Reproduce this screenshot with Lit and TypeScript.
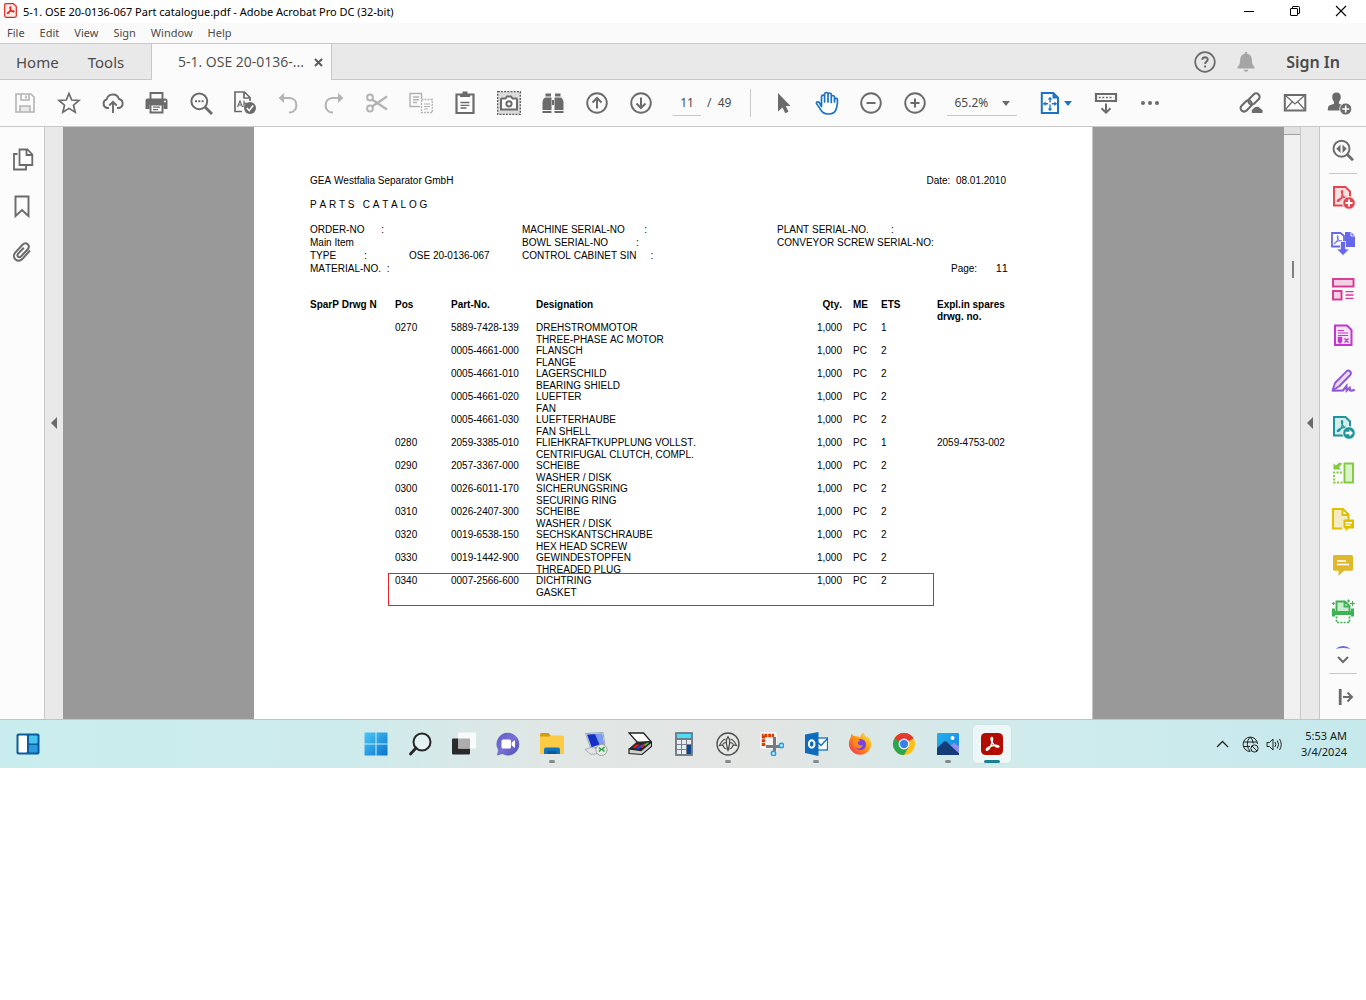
import { LitElement, html, css, svg, nothing } from "lit";
import type { SVGTemplateResult } from "lit";
import { customElement } from "lit/decorators.js";
import { classMap } from "lit/directives/class-map.js";

type Glyph = SVGTemplateResult;

const PDF_MARK = "M12 5.5c-1.6 0-.9 3 .6 5.6 1.300 2.200 3 3.700 5 4 1.900.2 1.700-1.500-.6-1.700-2.600-.2-6 .6-8.600 2-2.300 1.300-2.600 2.900-1.300 2.800 1.700-.2 3.500-3.600 4.500-6.400.9-2.700 1.300-6.300.4-6.300z";

const tool: Record<string, Glyph> = {
  save: svg`<path d="M3 3h15l3 3v15H3z M8 3v6h8V3 M7 21v-6h10v6" fill="none" stroke="currentColor" stroke-width="1.600"/><path d="M13 4.500v3" stroke="currentColor" stroke-width="1.600"/><rect x="7.500" y="15.500" width="9" height="5" fill="currentColor" opacity=".25"/>`,
  star: svg`<path d="M12 2.500l2.700 6.500 7.300.500-5.500 4.700 1.700 7-6.200-3.800-6.200 3.800 1.700-7L2 9.500 9.300 9z" fill="none" stroke="currentColor" stroke-width="1.700"/>`,
  cloud: svg`<path d="M8 17H6.200A4.500 4.500 0 0 1 5.700 8.300 6.400 6.400 0 0 1 18 8a4.600 4.600 0 0 1 0 9h-2" fill="none" stroke="currentColor" stroke-width="1.900"/><path d="M12 22V11M8.300 14.500L12 10.800l3.700 3.700" fill="none" stroke="currentColor" stroke-width="1.900"/>`,
  print: svg`<path d="M5.500 8V2h12v6" fill="none" stroke="currentColor" stroke-width="1.900"/><path d="M2.500 7.500h18q2 0 2 2V18h-4v-4H4.500v4h-4V9.500q0-2 2-2z" fill="currentColor"/><path d="M5.500 13.500v8h12v-8z" fill="#fff" stroke="currentColor" stroke-width="1.900"/><path d="M8 16.200h7M8 18.700h5" stroke="currentColor" stroke-width="1.300"/><circle cx="20" cy="10.500" r="1" fill="#fff"/>`,
  find: svg`<circle cx="10.300" cy="10.300" r="7.900" fill="none" stroke="currentColor" stroke-width="2"/><path d="M16 16l7 7" stroke="currentColor" stroke-width="2.800"/><path d="M6 9.300h2v2H6zm3.300 0h2v2h-2zm3.300 0h2v2h-2z" fill="currentColor"/>`,
  spell: svg`<path d="M9 20.500H2V1h9.500L17 6.500V10M11 1v6h6" fill="none" stroke="currentColor" stroke-width="1.700"/><path d="M4.500 16l2.500-6 2.500 6M5.500 14h3.200M11 9.500V16M11 13q3-2 3 1" fill="none" stroke="currentColor" stroke-width="1.200"/><circle cx="17" cy="17" r="6" fill="currentColor"/><path d="M13.800 17l2.400 2.500 4-5" fill="none" stroke="#fff" stroke-width="1.600"/>`,
  undo: svg`<path d="M4 7h8.500c9.500.5 9 14.500-.5 14.500" fill="none" stroke="currentColor" stroke-width="2.100"/><path d="M1.500 7L7 2v10z" fill="currentColor"/>`,
  redo: svg`<path d="M20 7h-8.500C2 7.500 2.500 21.500 12 21.500" fill="none" stroke="currentColor" stroke-width="2.100"/><path d="M22.500 7L17 2v10z" fill="currentColor"/>`,
  cut: svg`<circle cx="5" cy="6.500" r="2.900" fill="none" stroke="currentColor" stroke-width="2"/><circle cx="5" cy="17.500" r="2.900" fill="none" stroke="currentColor" stroke-width="2"/><path d="M7 8.500L22 18.500M7 15.500L22 5.500" stroke="currentColor" stroke-width="2.300"/>`,
  copy: svg`<path d="M11 15.500H1V2.500h11.500V8M4 6h6M4 8.700h6M4 11.500h4" fill="none" stroke="currentColor" stroke-width="1.500"/><path d="M12.500 8.500h10.800V21.500H12.500z" fill="#fbfbfb" stroke="currentColor" stroke-width="1.400" stroke-dasharray="2 1"/><path d="M15 13h6M15 15.500h6M15 18h4" stroke="currentColor" stroke-width="1.200"/>`,
  paste: svg`<path d="M3.500 3.500h17v18.500h-17z" fill="#fff" stroke="currentColor" stroke-width="2.200"/><path d="M7 3h10v3H7zM9.500 3V.5h5V3z" fill="currentColor"/><path d="M7.500 11.500h9M7.500 14.300h9M7.500 17h6" stroke="currentColor" stroke-width="1.300"/>`,
  snap: svg`<rect x=".7" y=".7" width="22.600" height="22.600" fill="#dcdcdc" stroke="#5a5a5a" stroke-width="1.300" stroke-dasharray="2 1.200"/><path d="M5 7.500h3.500l1.500-2h4l1.500 2H19q1 0 1 1V18.500H4V8.500q0-1 1-1z" fill="#fff" stroke="currentColor" stroke-width="2"/><circle cx="12" cy="12.800" r="2.600" fill="#fff" stroke="currentColor" stroke-width="2"/>`,
  binoc: svg`<path d="M4.500 2.500h5.500v3H4.500zM14 2.500h5.500v3H14zM4 6.500h6.500V19H1.500v-8q0-3 2.500-4.500zM20 6.500h-6.500V19h9v-8q0-3-2.500-4.500zM1.500 20h9v2h-9zM13.500 20h9v2h-9zM11 9h2v5h-2z" fill="currentColor"/>`,
  up: svg`<circle cx="12" cy="12" r="9.800" fill="none" stroke="currentColor" stroke-width="1.900"/><path d="M12 17.500V7.500M7.500 11.500L12 7l4.500 4.500" fill="none" stroke="currentColor" stroke-width="2"/>`,
  down: svg`<circle cx="12" cy="12" r="9.800" fill="none" stroke="currentColor" stroke-width="1.900"/><path d="M12 6.500v10M7.500 12.500L12 17l4.500-4.500" fill="none" stroke="currentColor" stroke-width="2"/>`,
  arrow: svg`<path d="M7 2v18.500l4.500-4 2.700 5.800 3.300-1.500L14.800 15h4.700z" fill="currentColor"/>`,
  hand: svg`<path d="M6.500 15.500V5.800q.2-1.600 1.600-1.600 1.500 0 1.500 1.600V11 3.200Q9.800 1.500 11.300 1.500T13 3.200V11 3.500q.2-1.500 1.700-1.500t1.600 1.600V11.500 6q.2-1.500 1.600-1.500T19.500 6q0 0 0 1.500V11l.1-2.500q.4-1.400 1.700-1.200 1.200.3 1.200 1.700c0 6-.7 10-3.500 12.500-2.500 2-8.500 2-11 0C5.500 19.500 4 15.500 1.600 12.700q-.6-1.200.5-1.700 1.400-.5 2.400.9z" fill="#fff" stroke="currentColor" stroke-width="1.700" stroke-linejoin="round"/>`,
  minus: svg`<circle cx="12" cy="12" r="9.800" fill="none" stroke="currentColor" stroke-width="1.900"/><path d="M7.500 12h9" stroke="currentColor" stroke-width="2"/>`,
  plus: svg`<circle cx="12" cy="12" r="9.800" fill="none" stroke="currentColor" stroke-width="1.900"/><path d="M7.500 12h9M12 7.500v9" stroke="currentColor" stroke-width="2"/>`,
  fit: svg`<path d="M3.800 2h11.500L20 6.700V22H3.800z" fill="#fff" stroke="currentColor" stroke-width="2"/><path d="M14.500 2v5.500H20z" fill="currentColor"/><path d="M12 7v4.500M12 13.500v5.500M5.500 12.700h4.700M13.800 12.700h4.700" stroke="currentColor" stroke-width="1.400"/><path d="M9.700 8.500L12 5.800l2.300 2.700zM9.700 17.500L12 20.200l2.300-2.700zM7.700 10.400L5 12.700l2.700 2.300zM16.300 10.400L19 12.700 16.300 15z" fill="currentColor"/>`,
  scroll: svg`<path d="M2 3h20v7H2z" fill="none" stroke="currentColor" stroke-width="2.200"/><path d="M4.700 6.500h14.600" stroke="currentColor" stroke-width="1.700" stroke-dasharray="2 1.600"/><path d="M12 12.500V20M7.500 17.200l4.500 4.500 4.500-4.500" fill="none" stroke="currentColor" stroke-width="2"/>`,
  more: svg`<circle cx="5" cy="12" r="2" fill="currentColor"/><circle cx="12" cy="12" r="2" fill="currentColor"/><circle cx="19" cy="12" r="2" fill="currentColor"/>`,
  link: svg`<g fill="none" stroke="currentColor" stroke-width="2.100"><rect x="8.500" y="4.500" width="13" height="7" rx="3.500" transform="rotate(-45 15 8)"/><rect x=".7" y="11.500" width="13" height="7" rx="3.500" transform="rotate(-45 7.200 15)"/></g><path d="M13.500 22.500a3 3 0 0 1 .8-5.300 4.300 4.300 0 0 1 7.500.3 3 3 0 0 1 1.500 5z" fill="currentColor" stroke="#fbfbfb"/>`,
  mail: svg`<path d="M1.800 4h20.500v15.500H1.800z" fill="none" stroke="currentColor" stroke-width="2"/><path d="M2.500 4.500L12 13l9.500-8.500M2.500 18.500L9 11M21.500 18.500L15 11" fill="none" stroke="currentColor" stroke-width="1.200"/>`,
  user: svg`<path d="M9.500 1.500c3 0 4.300 2 4.300 4.500 0 2-.8 3.700-1.800 4.700v2l3 1.200q-3 2.300-2 5.500H.8q0-4.500 1.500-5L7 12.700v-2C6 9.700 5.200 8 5.200 6c0-2.500 1.300-4.500 4.300-4.500z" fill="currentColor"/><circle cx="18.700" cy="18" r="6" fill="currentColor" stroke="#fbfbfb" stroke-width=".8"/><path d="M15.200 18h7M18.700 14.500v7" stroke="#fff" stroke-width="1.600"/>`,
  help: svg`<circle cx="12" cy="12" r="9.800" fill="none" stroke="currentColor" stroke-width="1.700"/><path d="M9.300 9.800q.1-2.600 2.800-2.600 2.600.1 2.600 2.300 0 1.300-1.400 2.200-1.200.9-1.200 2.200M12.100 15.600v2" fill="none" stroke="currentColor" stroke-width="2"/>`,
  bell: svg`<path d="M10.800 2.500q1.200-1.500 2.400 0v1.200q4.600 1 4.600 6 0 5 2.700 7.300v1.500h-17V17q2.700-2.300 2.700-7.300 0-5 4.600-6zM9.500 19.700h5q-.6 2.100-2.500 2.100t-2.500-2.100z" fill="#a5a5a5"/>`,
  pages: svg`<path d="M7.500 6H4V21.500H16V18" fill="none" stroke="currentColor" stroke-width="1.800"/><path d="M9.500 1.500h8L22.300 6.500V17H9.500zM16.500 1.500V7h5.700" fill="#fff" stroke="currentColor" stroke-width="1.800"/>`,
  mark: svg`<path d="M5.500 2.500h13v19.500l-6.500-6-6.500 6z" fill="none" stroke="currentColor" stroke-width="1.900"/>`,
  clip: svg`<path d="M20 10.500l-7.500 8.300c-4.600 4.700-11.500-1-7.300-6.200L12.500 4.800c3.600-3.600 8.400.6 5.200 4.500l-6.500 7c-2.300 2.200-5-.1-3-2.700l5.600-5.800" fill="none" stroke="currentColor" stroke-width="2"/>`,
  lens: svg`<circle cx="10.500" cy="10.700" r="8" fill="none" stroke="currentColor" stroke-width="1.900"/><path d="M16.300 16.500l5.700 5.700" stroke="currentColor" stroke-width="2.700"/><path d="M9.500 6.500v8.500L5.300 10.700zM11.500 6.500v8.500l4.200-4.300z" fill="currentColor"/>`,
  createPdf: svg`<path d="M3 2h11.500L19 6.500V20.500H3z" fill="#fbe0e1" stroke="currentColor" stroke-width="2"/><path d=${PDF_MARK} transform="translate(1 1) scale(.85)" fill="none" stroke="currentColor" stroke-width="1.500"/><circle cx="18" cy="18" r="6.300" fill="currentColor" stroke="#fbfbfb"/><path d="M14.500 18h7M18 14.500v7" stroke="#fff" stroke-width="1.900"/>`,
  combine: svg`<path d="M14 1h6l4 4v11H14z" fill="currentColor"/><path d="M20 1v4h4" fill="none" stroke="#fff" stroke-width=".9"/><path d="M1 2h8.500L13 5v10.500H1z" fill="#fff" stroke="currentColor" stroke-width="1.800"/><path d=${PDF_MARK} transform="translate(-1 1) scale(.65)" fill="none" stroke="currentColor" stroke-width="1.500"/><path d="M9.500 10.500h5v7.500h4L12 24.500 5.500 18h4z" fill="currentColor" stroke="#fbfbfb" stroke-width=".8"/>`,
  organize: svg`<rect x="2" y="2" width="20.500" height="7.500" fill="#f5cfe4" stroke="currentColor" stroke-width="1.900"/><rect x="2" y="14" width="8.500" height="8.500" fill="#f5cfe4" stroke="currentColor" stroke-width="1.900"/><path d="M14.500 14.700h8M14.500 18h8M14.500 21.300h8" stroke="currentColor" stroke-width="1.300"/>`,
  form: svg`<path d="M4 2.500h12l4.500 4.500v15H4z" fill="#f7e3f9" stroke="currentColor" stroke-width="2"/><path d="M7 7.500h6M7 10h10M7 12.500h10" stroke="currentColor" stroke-width="1.200"/><path d="M7.500 14.500h3v4l-1.500 1.500-1.500-1.500zM13.500 15.500l4 4M17.500 15.500l-4 4" stroke="currentColor" stroke-width="1.400" fill="currentColor"/>`,
  sign: svg`<path d="M1.500 21.500L4 14 15.500 2.300q2-1.500 3.700.2 1.500 1.700.1 3.500L8.500 17z" fill="#e9dcf9" stroke="currentColor" stroke-width="1.900" stroke-linejoin="round"/><path d="M1.500 21.700L12 21.500l3.500-4.500.2 4.500 3-2.700.5 2.700q3 .5 4.500-1" fill="none" stroke="currentColor" stroke-width="2.200"/>`,
  exportPdf: svg`<path d="M3 2h11.500L19 6.500V20.500H3z" fill="#d3ecec" stroke="currentColor" stroke-width="2"/><path d=${PDF_MARK} transform="translate(1 1) scale(.85)" fill="none" stroke="currentColor" stroke-width="1.500"/><circle cx="18" cy="18" r="6.300" fill="currentColor" stroke="#fbfbfb"/><path d="M14.500 16.700h4v-2.200l3.500 3.500-3.500 3.500v-2.200h-4z" fill="#fff"/>`,
  optimize: svg`<rect x="13.500" y="2.500" width="8.500" height="19" fill="#dcf3cb" stroke="currentColor" stroke-width="1.900"/><path d="M11 11.500H3v10h8.500" fill="none" stroke="currentColor" stroke-width="1.900" stroke-dasharray="2 1.500"/><path d="M2.500 2.500l2.300 2L8.500 1.500l2.800 1L8 6.200l2 2.300H2.500z" fill="currentColor"/>`,
  protect: svg`<path d="M11 21.500H2V2h10l5.500 5.500V13M11.500 2v6h6" fill="#f3ecc2" stroke="currentColor" stroke-width="2"/><path d="M12.500 12.500h10.500v9h-5.500l-2.800 3v-3h-2.200z" fill="currentColor"/><path d="M14.500 15.700h6.500M14.500 18.300h5" stroke="#fff" stroke-width="1.400"/>`,
  comment: svg`<path d="M3.500 2h17q1.500 0 1.500 1.500v12.700q0 1.500-1.500 1.500H13L7.500 23v-5.300h-4Q2 17.700 2 16.200V3.500Q2 2 3.500 2z" fill="currentColor"/><path d="M6 8h9M6 11.500h12" stroke="#fff" stroke-width="1.700"/>`,
  scan: svg`<path d="M5.500 12V2.500h8.500l4.500 4.500v5M13.500 2.500v5h5" fill="#c9ebcf" stroke="currentColor" stroke-width="1.900"/><path d="M1 9.500h3V12h16V9.500h3v8h-3V16H4v1.500H1z" fill="currentColor"/><path d="M5.500 17.500v6h13v-6" fill="none" stroke="currentColor" stroke-width="1.700" stroke-dasharray="2 1.300"/><path d="M2.500 3v3M1 4.500h3M17.500.5v3M16 2h3M21.500 2v5M19 4.500h5" stroke="currentColor" stroke-width="1.200"/>`,
  next: svg`<path d="M12 11q-4.500.2-7.500 3l3.500-.7q4-.6 8 0l3.500.7q-3-2.800-7.500-3z" fill="#6a67e8"/>`,
  collapse: svg`<path d="M9.200 4v16" stroke="currentColor" stroke-width="2.800"/><path d="M12 12h9M16.500 7.500L21 12l-4.500 4.500" fill="none" stroke="currentColor" stroke-width="2"/>`,
};

const app: Record<string, Glyph> = {
  widgets: svg`<rect x=".5" y="1.500" width="23" height="21" rx="2" fill="#0b5d9e"/><rect x="2.500" y="3.500" width="8.500" height="17" rx="1" fill="#fff"/><rect x="13" y="3.500" width="8.500" height="8" rx="1" fill="#49c3f2"/><rect x="13" y="13" width="8.500" height="7.500" rx="1" fill="#2a9be0"/>`,
  start: svg`<defs><linearGradient id="w" x1="0" y1="0" x2="1" y2="1"><stop offset="0" stop-color="#4cc9f7"/><stop offset="1" stop-color="#0673cf"/></linearGradient></defs><path d="M.5.500h11v11H.5zM12.500.500h11v11h-11zM.5 12.500h11v11H.5zM12.500 12.500h11v11h-11z" fill="url(#w)"/>`,
  search: svg`<circle cx="14" cy="10" r="8.500" fill="#e5f2f2" stroke="#262626" stroke-width="2"/><path d="M8 16l-5.500 6" stroke="#262626" stroke-width="2.800" stroke-linecap="round"/>`,
  tasks: svg`<rect x="0" y="6.500" width="18" height="16" rx="1" fill="#2b2b2b"/><rect x="6" y=".5" width="18" height="16" rx="1" fill="#fafafa"/><path d="M6 6.500h12v10H6z" fill="#adadad"/>`,
  chat: svg`<defs><linearGradient id="c" x1="0" y1="0" x2="1" y2="1"><stop offset="0" stop-color="#5b5fc7"/><stop offset=".5" stop-color="#7a6fd6"/><stop offset="1" stop-color="#4a4cb4"/></linearGradient></defs><path d="M12 .8a11.300 11.300 0 1 1-5.500 21.200L.8 23.500 2.200 18A11.300 11.300 0 0 1 12 .8z" fill="url(#c)"/><rect x="5.500" y="7.500" width="9.500" height="9" rx="1.500" fill="#fff"/><path d="M15.700 10.500L19 8v8l-3.300-2.500z" fill="#fff"/>`,
  folder: svg`<path d="M0 2.500q0-1.500 1.500-1.500h7l2 2.500V8H0z" fill="#d99a0b"/><path d="M0 4.500h9.500L11 3.500h11.500q1.500 0 1.500 1.500v17H0z" fill="#fbcb45"/><path d="M4 22v-4.500q0-2 2-2h12q2 0 2 2V22z" fill="#1173bb"/><path d="M7.500 19h9v3h-9z" fill="#0b5791"/>`,
  remote: svg`<path d="M1.500 1.500L19 .5l2 12L7 17z" fill="#dce6ee" stroke="#8a98a6" stroke-width=".8"/><path d="M3 2.500L18 1.800l1.600 9.700L7.500 15.200z" fill="#1430c8"/><path d="M11 2.200l7-.4 1.600 9.700-4 1.200z" fill="#7d9df3"/><path d="M1 17.500l6-2 6 1 1 5-7 1z" fill="#dfe4e8" stroke="#8f989f" stroke-width=".7"/><circle cx="17.500" cy="18" r="5.600" fill="#e7ebe6" stroke="#9aa39a"/><path d="M15 15.500l2 2-2 2M20.500 15l-2.300 2.300 2.300 2.200" stroke="#2ba143" stroke-width="1.600" fill="none"/>`,
  scanner: svg`<path d="M1 1h14.500L23 9.500 10 11z" fill="#fff" stroke="#222" stroke-width="1.300"/><path d="M1 17l8-7 14.500 0L13 18.500z" fill="#222" stroke="#333"/><path d="M4.500 15.700l4-3.500 3 .5-4 3.500z" fill="#e02020"/><path d="M8 16.400l5-4 2.500.5-4.500 4z" fill="#2040f0"/><path d="M12 15.500l4-4h2.500l-4 4.500z" fill="#e02020"/><path d="M15.500 13.500l3.500-2.700h2.500l-3.500 3z" fill="#2be02b"/><path d="M1 17l12 1.500 10.500-8.500v4.500L14 22.500 1 21.500z" fill="#d0d0d0" stroke="#222" stroke-width="1.200"/>`,
  calc: svg`<rect x="3" y="0" width="18" height="24" rx="1" fill="#747f8c"/><rect x="5" y="2" width="14" height="4" fill="#4fdcf7"/><path d="M5 8h4v4H5zM10 8h4v4h-4zM15 8h4v4h-4zM5 13h4v4H5zM10 13h4v4h-4zM5 18h4v4H5zM10 18h4v4h-4z" fill="#e8ebee"/><path d="M15 13h4v9h-4z" fill="#0d4590"/>`,
  gea: svg`<circle cx="12" cy="12" r="11" fill="#e7e9e7" stroke="#4c4c4c" stroke-width="1.300"/><path d="M12 4.500Q9.500 8 10.500 12l1.500 7 1.500-7q1-4-1.500-7.500zM9.500 7Q6 8 3.500 13.500q3-1 4 .5.300 2.500 3 3M14.500 7q3.500 1 6 6.500-3-1-4 .5-.3 2.500-3 3M6.500 12.500Q8 10.500 10 10.500M17.500 12.500q-1.500-2-3.500-2" fill="none" stroke="#4c4c4c" stroke-width="1.200"/>`,
  snip: svg`<rect x="0" y="0" width="17" height="17" rx="2" fill="#f5f5f5"/><path d="M3.500 14V3.500H14" fill="none" stroke="#d83b01" stroke-width="3.400" stroke-dasharray="3 .8"/><path d="M14.500 5v9.500h5M6 14.500h8M14.500 14v5" stroke="#767a80" stroke-width="3" fill="none"/><circle cx="21.500" cy="13.500" r="2.100" fill="#fff" stroke="#1e9be0" stroke-width="1.600"/><circle cx="13.500" cy="21.500" r="2.100" fill="#fff" stroke="#1e9be0" stroke-width="1.600"/>`,
  outlook: svg`<rect x="12" y="6" width="11.500" height="12" fill="#fff" stroke="#1173c6" stroke-width="1.300"/><path d="M13 9.500l4 4 7-7.500" fill="none" stroke="#1173c6" stroke-width="1.500"/><path d="M1 2.500L14.500 0v24L1 21z" fill="#0f6cbd"/><ellipse cx="7.700" cy="12" rx="2.800" ry="3.700" fill="none" stroke="#fff" stroke-width="2"/>`,
  firefox: svg`<defs><linearGradient id="f" x1="1" y1="0" x2="0" y2="1"><stop offset="0" stop-color="#fff04a"/><stop offset=".45" stop-color="#ff980e"/><stop offset="1" stop-color="#f0285a"/></linearGradient></defs><path d="M3 5q-.3-1.700.5-3 1.500 1.800 3.500 2.300Q10 4 12 5.500 12.500 2 16 .5q-.3 2.800 2.700 5 .8-.5.500-1.700Q23.300 7.500 23.200 13A11.200 11.200 0 1 1 3 5z" fill="url(#f)"/><circle cx="12.500" cy="12.500" r="5.500" fill="#7542e5"/><path d="M5 8.500q4-2 7.500.5-3.500.5-2.500 3 2 2.500 5 .8-1.500 4.200-5.500 3.500Q4.500 14.500 5 8.500z" fill="#ff8a16"/>`,
  chrome: svg`<circle cx="12" cy="12" r="11" fill="#fbc116"/><path d="M12 12L2.470 6.500A11 11 0 0 1 21.530 6.500z" fill="#e33b2e"/><path d="M2.470 6.500A11 11 0 0 0 12 23l4.800-8.200L12 12z" fill="#2da44f"/><path d="M7.500 14.500L2.900 6.500l5-.5 4.100 6z" fill="#2da44f"/><path d="M2.700 6.200A11 11 0 0 1 21.500 6.500H12L7.500 10z" fill="#e33b2e"/><circle cx="12" cy="12" r="5.400" fill="#fff"/><circle cx="12" cy="12" r="4.200" fill="#3c7fe8"/>`,
  photos: svg`<defs><linearGradient id="p" x1="0" y1="0" x2="1" y2="1"><stop offset="0" stop-color="#21b2ee"/><stop offset="1" stop-color="#1b7fe0"/></linearGradient></defs><rect x="1" y="1" width="22" height="22" rx="1" fill="url(#p)"/><path d="M12 15l5-3.500q1.500-1 3 .5l3 2.500V23h-7z" fill="#8a8fe8"/><path d="M1 16l6.500-6q1.700-1.500 3.300 0L23 21.500V23H1z" fill="#133c78"/><circle cx="16.500" cy="6" r="2" fill="#fff"/>`,
  acrobat: svg`<rect x="1" y="1" width="22" height="22" rx="4.500" fill="#b30b00"/><path d=${PDF_MARK} fill="none" stroke="#fff" stroke-width="1.500"/>`,
};

const SVG = (g: Glyph, cls = "icon") => html`<svg class=${cls} viewBox="0 0 24 24" aria-hidden="true">${g}</svg>`;

@customElement("icon-button")
class IconButton extends LitElement {
  static properties = { glyph: {}, label: {}, tone: {} };
  declare glyph: string;
  declare label: string;
  declare tone: string;
  static styles = css`
    :host { display: block; }
    button { display: flex; width: 100%; height: 100%; padding: 0; border: 0; background: none; align-items: center; justify-content: center; color: #6b6b6b; }
    .icon { width: 24px; height: 24px; flex: none; overflow: visible; }
    .off { color: #b4b4b4; }
    .blue { color: #1b73c8; }
    .red { color: #e34850; }
    .indigo { color: #6767ec; }
    .pink { color: #d83790; }
    .magenta { color: #c038cc; }
    .purple { color: #9256d9; }
    .teal { color: #1b959a; }
    .lime { color: #7fcb3c; }
    .gold { color: #dfbf00; }
    .amber { color: #dfb92b; }
    .green { color: #3fb354; }
  `;
  render() {
    return html`<button class=${this.tone ?? ""} aria-label=${this.label}>${SVG(tool[this.glyph])}</button>`;
  }
}

type Row = [string, string, string, string, string, string];
const rows: Row[] = [
  ["0270", "5889-7428-139", "DREHSTROMMOTOR", "THREE-PHASE AC MOTOR", "1", ""],
  ["", "0005-4661-000", "FLANSCH", "FLANGE", "2", ""],
  ["", "0005-4661-010", "LAGERSCHILD", "BEARING SHIELD", "2", ""],
  ["", "0005-4661-020", "LUEFTER", "FAN", "2", ""],
  ["", "0005-4661-030", "LUEFTERHAUBE", "FAN SHELL", "2", ""],
  ["0280", "2059-3385-010", "FLIEHKRAFTKUPPLUNG VOLLST.", "CENTRIFUGAL CLUTCH, COMPL.", "1", "2059-4753-002"],
  ["0290", "2057-3367-000", "SCHEIBE", "WASHER / DISK", "2", ""],
  ["0300", "0026-6011-170", "SICHERUNGSRING", "SECURING RING", "2", ""],
  ["0310", "0026-2407-300", "SCHEIBE", "WASHER / DISK", "2", ""],
  ["0320", "0019-6538-150", "SECHSKANTSCHRAUBE", "HEX HEAD SCREW", "2", ""],
  ["0330", "0019-1442-900", "GEWINDESTOPFEN", "THREADED PLUG", "2", ""],
  ["0340", "0007-2566-600", "DICHTRING", "GASKET", "2", ""],
];

@customElement("catalog-page")
class CatalogPage extends LitElement {
  static styles = css`
    :host { display: block; font: 10px/13px "Liberation Sans", Arial, sans-serif; color: #000; font-kerning: none; }
    .sheet { background: #fff; padding: 47px 86px 120px 56px; border-right: 1px solid #c4c4c4; position: relative; }
    .top { display: flex; justify-content: space-between; white-space: pre; }
    h1 { font: inherit; margin: 11px 0 12px; white-space: pre; }
    .meta { display: grid; grid-template-columns: 99px 113px 255px 1fr; white-space: pre; }
    .page-no { display: flex; justify-content: space-between; padding-left: 174px; margin-right: -2px; }
    .num { font-size: 11px; }
    table { table-layout: fixed; width: 100%; border-collapse: collapse; margin-top: 24px; line-height: 12px; }
    th, td { padding: 0; text-align: left; vertical-align: top; white-space: nowrap; }
    th { line-height: 12px; }
    td { line-height: 10px; }
    .c-spar, .c-part { width: 85px; }
    .c-pos, .c-ets { width: 56px; }
    .c-qty { width: 40px; }
    .c-me { width: 39px; }
    .c-expl { width: 69px; }
    .qty { text-align: right; }
    .me { padding-left: 11px; }
    thead tr { height: 24px; }
    .en { display: block; line-height: 13px; }
    .markup { position: absolute; left: 134px; top: 446px; width: 544px; height: 31px; border: 1px solid #e5232b; }
  `;
  render() {
    return html`<article class="sheet">
      <div class="top"><span>GEA Westfalia Separator GmbH</span><span>Date:  08.01.2010</span></div>
      <h1>P A R T S   C A T A L O G</h1>
      <div class="meta">
        <span>ORDER-NO${" ".repeat(6)}:</span><span></span><span>MACHINE SERIAL-NO${" ".repeat(7)}:</span><span>PLANT SERIAL-NO.${" ".repeat(8)}:</span>
        <span>Main Item</span><span></span><span>BOWL SERIAL-NO${" ".repeat(10)}:</span><span>CONVEYOR SCREW SERIAL-NO:</span>
        <span>TYPE${" ".repeat(10)}:</span><span>OSE 20-0136-067</span><span>CONTROL CABINET SIN${" ".repeat(5)}:</span><span></span>
        <span>MATERIAL-NO.  :</span><span></span><span></span><span class="page-no"><span>Page:</span><span class="num">11</span></span>
      </div>
      <table>
        <colgroup><col class="c-spar"><col class="c-pos"><col class="c-part"><col><col class="c-qty"><col class="c-me"><col class="c-ets"><col class="c-expl"></colgroup>
        <thead><tr><th>SparP Drwg N</th><th>Pos</th><th>Part-No.</th><th>Designation</th><th class="qty">Qty.</th><th class="me">ME</th><th>ETS</th><th>Expl.in spares<br>drwg. no.</th></tr></thead>
        <tbody>${rows.map(([pos, part, de, en, ets, expl]) => html`<tr><td></td><td>${pos}</td><td>${part}</td><td>${de}<span class="en">${en}</span></td><td class="qty">1,000</td><td class="me">PC</td><td>${ets}</td><td>${expl}</td></tr>`)}</tbody>
      </table>
      <div class="markup"></div>
    </article>`;
  }
}

const leftTools = [
  ["save", "Save", "off"], ["star", "Star file"], ["cloud", "Upload"], ["print", "Print"], ["find", "Find"],
  ["spell", "Check"], ["undo", "Undo", "off"], ["redo", "Redo", "off"], ["cut", "Cut", "off"], ["copy", "Copy", "off"],
  ["paste", "Paste"], ["snap", "Snapshot"], ["binoc", "Search"], ["up", "Previous page"], ["down", "Next page"],
];
const viewTools = [["arrow", "Select"], ["hand", "Pan", "blue"], ["minus", "Zoom out"], ["plus", "Zoom in"]];
const railTools = [
  ["createPdf", "Create PDF", "red"], ["combine", "Combine files", "indigo"], ["organize", "Organize pages", "pink"],
  ["form", "Prepare form", "magenta"], ["sign", "Fill and sign", "purple"], ["exportPdf", "Export PDF", "teal"],
  ["optimize", "Compare", "lime"], ["protect", "Send for comments", "gold"], ["comment", "Comment", "amber"], ["scan", "Scan and OCR", "green"],
];
const running = new Set(["folder", "gea", "outlook", "photos", "acrobat"]);
const taskApps = ["start", "search", "tasks", "chat", "folder", "remote", "scanner", "calc", "gea", "snip", "outlook", "firefox", "chrome", "photos", "acrobat"];

@customElement("app-root")
class AppRoot extends LitElement {
  static styles = css`
    :host { display: block; font: 11px/16px "Noto Sans", "Open Sans", sans-serif; color: #000; background: #fff; }
    button, input, select { font: inherit; color: inherit; }
    button { background: none; border: 0; padding: 0; }
    .title { display: flex; align-items: center; height: 23px; padding: 0 2px 0 4px; }
    .title .pdf { width: 13px; height: 15px; margin: 0 6px 2px 0; }
    .title .name { flex: 1; }
    .win { width: 46px; height: 20px; display: flex; align-items: center; justify-content: center; margin-bottom: 2px; }
    .win svg { width: 12px; height: 12px; }
    .menu { display: flex; gap: 15px; height: 20px; padding-left: 7px; background: #fafafa; color: #4b4b4b; align-items: center; }
    .tabs { display: flex; height: 35px; background: #e9e9e9; border: solid #c8c8c8; border-width: 1px 0; color: #4b4b4b; font-size: 14px; align-items: stretch; }
    .places { width: 151px; box-sizing: border-box; padding-left: 16px; display: flex; gap: 29px; font-size: 15px; }
    .tab { display: flex; align-items: center; justify-content: space-between; width: 181px; box-sizing: border-box; padding: 0 8px 0 26px; background: #fbfbfb; border: solid #c8c8c8; border-width: 0 1px; margin-bottom: -1px; font-family: "Open Sans", "Noto Sans", sans-serif; }
    .tab button { display: flex; }
    .tab svg { width: 9px; height: 9px; }
    .account { margin-left: auto; display: flex; align-items: center; padding-right: 26px; }
    .account icon-button { width: 41px; height: 34px; }
    .signin { font-weight: 600; font-size: 16px; margin-left: 20px; }
    .tools { display: flex; align-items: center; height: 46px; background: #fbfbfb; border-bottom: 1px solid #c8c8c8; padding: 0 5px 0 3px; }
    .tools icon-button { width: 44px; height: 44px; }
    .pageno { width: 28px; height: 26px; margin-left: 10px; box-sizing: border-box; padding: 0; border: 0; border-bottom: 1px solid #c8c8c8; background: none; text-align: center; font-size: 12px; color: #4b4b4b; border-radius: 0; outline: 0; }
    .of { margin: 0 19px 0 6px; font-size: 12px; color: #4b4b4b; white-space: pre; }
    .rule { width: 1px; height: 28px; background: #c8c8c8; margin-right: 10px; }
    .zoom { position: relative; margin: 0 19px 0 10px; }
    .zoom select { appearance: none; width: 70px; height: 26px; padding: 0 7px; border: 0; border-bottom: 1px solid #c8c8c8; background: none; font-size: 12px; color: #4b4b4b; border-radius: 0; display: block; }
    .caret { width: 0; border: 4px solid transparent; border-top: 5px solid #6b6b6b; border-bottom: 0; }
    .zoom .caret { position: absolute; right: 7px; top: 11px; pointer-events: none; }
    .fit { display: flex; align-items: center; width: 48px; }
    .fit icon-button { width: 28px; }
    .fit .caret { border-top-color: #1b73c8; }
    .share { margin-left: auto; display: flex; }
    .main { display: flex; border-bottom: 1px solid #c0c4c4; }
    .nav { width: 45px; background: #fcfcfc; border-right: 1px solid #c8c8c8; padding: 10px 0; box-sizing: border-box; }
    .nav icon-button { height: 46px; }
    .handle { width: 18px; background: #e9e9e9; display: flex; align-items: center; justify-content: center; }
    .handle svg { width: 6px; height: 12px; }
    .canvas { flex: 1; display: flex; justify-content: center; background: #999; min-width: 0; }
    catalog-page { width: 839px; }
    .scroll { width: 17px; background: #f0f0f0; border-right: 1px solid #c8c8c8; box-sizing: border-box; }
    .thumb { height: 7px; background: #e0e0e0; border-bottom: 1px solid #a0a0a0; }
    .grip { width: 2px; height: 17px; background: #808080; margin: 126px 0 0 8px; }
    .rail { width: 47px; box-sizing: border-box; border-left: 1px solid #c8c8c8; background: #fbfbfb; display: flex; flex-direction: column; }
    .rail icon-button { height: 46px; }
    .sep { height: 1px; background: #c8c8c8; margin: 0 9px; flex: none; }
    .rail .peek { height: 14px; overflow: hidden; margin-top: 6px; }
    .expand { height: 12px; display: flex; justify-content: center; align-items: center; margin-bottom: 7px; }
    .expand svg { width: 12px; height: 8px; }
    .rail .last { height: 45px; }
    .taskbar { display: grid; grid-template-columns: 1fr auto 1fr; align-items: center; height: 48px; background: linear-gradient(90deg, #c9edee 0, #ceebec 26%, #e0e7e5 40%, #e3e5e3 55%, #cfebed 76%, #c6e9ec 100%); }
    .widgets { width: 24px; height: 24px; margin-left: 16px; justify-self: start; }
    .apps { display: flex; gap: 6px; padding-left: 1px; }
    .app { position: relative; width: 38px; height: 38px; border-radius: 4px; display: flex; align-items: center; justify-content: center; }
    .icon { width: 24px; height: 24px; flex: none; display: block; }
    .app.active { background: rgba(255,255,255,.6); box-shadow: 0 0 1px rgba(0,0,0,.2); }
    .dot { position: absolute; bottom: 0; width: 6px; height: 3px; border-radius: 2px; background: #84898a; }
    .active .dot { width: 16px; background: #1c7e93; }
    .tray { justify-self: end; display: flex; align-items: center; gap: 7px; padding-right: 19px; }
    .tray svg { width: 17px; height: 17px; }
    .tray .chev { margin-right: 4px; }
    .clock { text-align: right; margin-left: 11px; color: #1a1a1a; }
  `;

  private btn(t: string[], cls = "") {
    return html`<icon-button class=${cls} glyph=${t[0]} label=${t[1]} tone=${t[2] ?? ""}></icon-button>`;
  }

  render() {
    return html`
      <header class="title">
        <svg class="pdf" viewBox="0 0 13 15" aria-hidden="true"><path d="M2 .7h7.500l2.800 2.800v9.300q0 1.500-1.500 1.500H2q-1.300 0-1.300-1.500V2Q.7.7 2 .7z" fill="#fdecea" stroke="#e2231a" stroke-width="1.200"/><path d=${PDF_MARK} transform="translate(.2 1) scale(.52)" fill="none" stroke="#e2231a" stroke-width="2.600"/></svg>
        <span class="name">5-1. OSE 20-0136-067 Part catalogue.pdf - Adobe Acrobat Pro DC (32-bit)</span>
        <button class="win" aria-label="Minimize"><svg viewBox="0 0 12 12"><path d="M1 6.500h10" stroke="#000"/></svg></button>
        <button class="win" aria-label="Restore"><svg viewBox="0 0 12 12"><path d="M1.500 4q0-.5.500-.5h6q.5 0 .5.500v6q0 .5-.5.500H2q-.5 0-.5-.5zM3.500 3V2q0-.5.500-.5h5.500q1 0 1 1V8q0 .5-.5.500H9" fill="none" stroke="#000"/></svg></button>
        <button class="win" aria-label="Close"><svg viewBox="0 0 12 12"><path d="M1 1l10 10M11 1L1 11" stroke="#000" stroke-width="1.100"/></svg></button>
      </header>
      <nav class="menu">${["File", "Edit", "View", "Sign", "Window", "Help"].map((m) => html`<button>${m}</button>`)}</nav>
      <div class="tabs">
        <div class="places"><button>Home</button><button>Tools</button></div>
        <div class="tab"><span>5-1. OSE 20-0136-...</span><button aria-label="Close tab"><svg viewBox="0 0 9 9"><path d="M1 1l7 7M8 1L1 8" stroke="#5a5a5a" stroke-width="2"/></svg></button></div>
        <div class="account">${this.btn(["help", "Help"])}${this.btn(["bell", "Notifications"])}<button class="signin">Sign In</button></div>
      </div>
      <div class="tools">
        ${leftTools.map((t) => this.btn(t))}
        <input class="pageno" aria-label="Page number" value="11"><span class="of">/  49</span>
        <span class="rule"></span>
        ${viewTools.map((t) => this.btn(t))}
        <div class="zoom"><select aria-label="Zoom"><option>65.2%</option></select><span class="caret"></span></div>
        <div class="fit">${this.btn(["fit", "Fit page", "blue"])}<span class="caret"></span></div>
        ${this.btn(["scroll", "Page display"])}${this.btn(["more", "More tools"])}
        <div class="share">${this.btn(["link", "Share link"])}${this.btn(["mail", "Email"])}${this.btn(["user", "Share with people"])}</div>
      </div>
      <main class="main">
        <nav class="nav">${[["pages", "Page thumbnails"], ["mark", "Bookmarks"], ["clip", "Attachments"]].map((t) => this.btn(t))}</nav>
        <button class="handle" aria-label="Show left pane"><svg viewBox="0 0 6 12"><path d="M6 0v12L0 6z" fill="#6b6b6b"/></svg></button>
        <div class="canvas"><catalog-page></catalog-page></div>
        <div class="scroll"><div class="thumb"></div><div class="grip"></div></div>
        <button class="handle" aria-label="Show right pane"><svg viewBox="0 0 6 12"><path d="M6 0v12L0 6z" fill="#6b6b6b"/></svg></button>
        <aside class="rail">
          ${this.btn(["lens", "Search tools"])}
          <div class="sep"></div>
          ${railTools.map((t) => this.btn(t))}
          ${this.btn(["next", "Next tool"], "peek")}
          <button class="expand" aria-label="More"><svg viewBox="0 0 12 8"><path d="M1 1l5 5 5-5" fill="none" stroke="#6b6b6b" stroke-width="2"/></svg></button>
          <div class="sep"></div>
          ${this.btn(["collapse", "Collapse pane"], "last")}
        </aside>
      </main>
      <footer class="taskbar">
        <button class="widgets" aria-label="Widgets">${SVG(app.widgets)}</button>
        <div class="apps">${taskApps.map((k) => html`<button class=${classMap({ app: true, active: k === "acrobat" })} aria-label=${k}>${SVG(app[k])}${running.has(k) ? html`<span class="dot"></span>` : nothing}</button>`)}</div>
        <div class="tray">
          <svg class="chev" viewBox="0 0 17 17"><path d="M3 11l5.500-5.500L14 11" fill="none" stroke="#222" stroke-width="1.300"/></svg>
          <svg viewBox="0 0 17 17"><g fill="none" stroke="#222"><path d="M15.500 8A7.200 7.200 0 1 0 8 15.500M1.500 6h13.500M1.500 10.500H8M8.300 1Q5 4 5.300 8.300q.2 4.500 3 7.200M8.300 1q2.700 2.700 3 6.500"/><circle cx="12.500" cy="12.500" r="3.600"/><path d="M10 10l5 5"/></g></svg>
          <svg viewBox="0 0 17 17"><g fill="none" stroke="#222"><path d="M1 6.500h2.500L7 3v11l-3.500-3.500H1z"/><path d="M9 6q1.500 2.500 0 5M11.300 4.500q2.500 4 0 8M13.500 3q3.500 5.500 0 11"/></g></svg>
          <div class="clock"><div>5:53 AM</div><div>3/4/2024</div></div>
        </div>
      </footer>`;
  }
}
